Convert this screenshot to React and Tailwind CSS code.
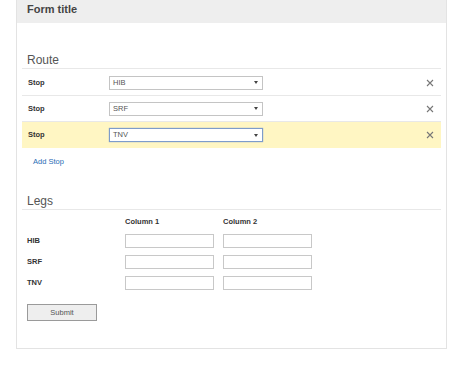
import React from 'react';

const stops = [
    { code: 'HIB', active: false },
    { code: 'SRF', active: false },
    { code: 'TNV', active: true },
];

function Cross() {
    return (
        <svg width="8" height="8" viewBox="0 0 8 8" className="text-[#777]">
            <path d="M1 1 L7 7 M7 1 L1 7" stroke="currentColor" strokeWidth="1.1" />
        </svg>
    );
}

function StopSelect({ value, active }) {
    return (
        <div
            className={`flex h-[14px] w-[154px] items-center justify-between border bg-white pl-[3px] pr-[4px] text-[7.5px] text-[#555] ${
                active ? 'border-[#7d9ccb] shadow-[0_0_1px_#7d9ccb]' : 'border-[#c4c4c4]'
            }`}
        >
            <span>{value}</span>
            <svg width="4" height="3" viewBox="0 0 4 3">
                <path d="M0 0 L4 0 L2 3 Z" fill="#444" />
            </svg>
        </div>
    );
}

function SectionHeading({ children }) {
    return (
        <h3 className="border-b border-[#e8e8e8] pb-[1px] pl-[5px] text-[12px] leading-[14px] text-[#555]">{children}</h3>
    );
}

export default function App() {
    return (
        <div className="h-[369px] w-[474px] bg-white font-['Liberation_Sans',Arial,sans-serif]">
            <div className="ml-[16px] w-[431px] border border-t-0 border-[#e3e3e3]">
                <div className="h-[23px] bg-[#eeeeee] pl-[10px] pt-[2px] text-[11px] font-bold leading-[14px] text-[#444]">
                    Form title
                </div>
                <div className="px-[5px] pb-[27px]">
                    <div className="mt-[30px]">
                        <SectionHeading>Route</SectionHeading>
                        {stops.map((s, i) => (
                            <div
                                key={s.code}
                                className={`flex h-[26px] items-center pl-[6px] pr-[7px] ${
                                    s.active ? 'bg-[#fff6c3]' : 'border-b border-[#e8e8e8]'
                                } ${i === 0 ? 'mt-[1px]' : ''}`}
                            >
                                <span className="w-[81px] text-[7.5px] font-bold text-[#333]">Stop</span>
                                <StopSelect value={s.code} active={s.active} />
                                <span className="ml-auto flex">
                                    <Cross />
                                </span>
                            </div>
                        ))}
                        <a href="#add" className="mt-[9px] block pl-[11px] text-[7.5px] leading-[10px] text-[#2a6db5]">
                            Add Stop
                        </a>
                    </div>

                    <div className="mt-[27px]">
                        <SectionHeading>Legs</SectionHeading>
                        <div className="mt-[7px] grid grid-cols-[89px_89px_89px] gap-x-[9px] gap-y-[7px] pl-[5px] text-[7.5px] font-bold text-[#333]">
                            <span />
                            <span className="leading-[10px]">Column 1</span>
                            <span className="leading-[10px]">Column 2</span>
                            {stops.map((s) => (
                                <React.Fragment key={s.code}>
                                    <span className="flex h-[14px] items-center">{s.code}</span>
                                    <div className="h-[14px] border border-[#c8c8c8] bg-white" />
                                    <div className="h-[14px] border border-[#c8c8c8] bg-white" />
                                </React.Fragment>
                            ))}
                        </div>
                        <button
                            type="button"
                            className="ml-[5px] mt-[14px] flex h-[17px] w-[70px] items-center justify-center border border-[#9a9a9a] bg-[#eeeeee] text-[7.5px] text-[#555]"
                        >
                            Submit
                        </button>
                    </div>
                </div>
            </div>
        </div>
    );
}
